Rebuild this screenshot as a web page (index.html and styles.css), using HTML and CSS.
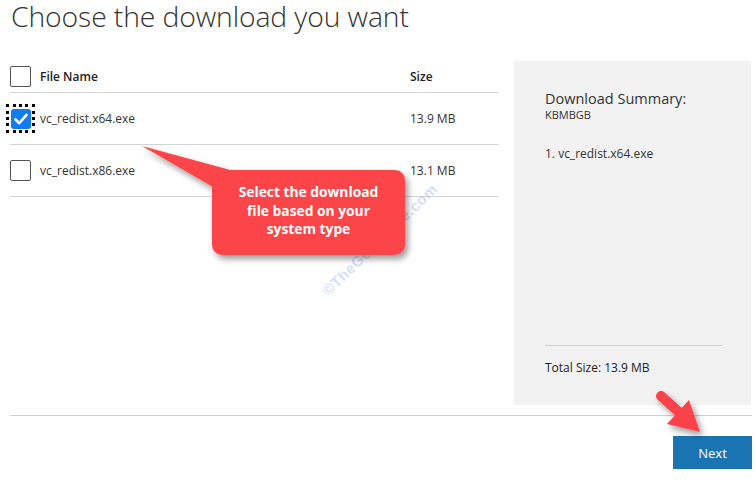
FILE: index.html
```html
<!DOCTYPE html>
<html lang="en">
<head>
<meta charset="utf-8">
<title>Choose the download you want</title>
<link rel="stylesheet" href="styles.css">
</head>
<body>
<div class="page">
  <h1 class="title">Choose the download you want</h1>
  <div class="content">
    <div class="files">
      <div class="row head">
        <span class="cell name"><span class="box"></span><span>File Name</span></span>
        <span class="cell size">Size</span>
      </div>
      <div class="row">
        <span class="cell name"><span class="focus"><span class="box checked"><svg viewBox="0 0 20 20" width="20" height="20"><path d="M4.5 10.5 L8.3 14.2 L15.5 5.8" fill="none" stroke="#fff" stroke-width="2.6" stroke-linecap="round" stroke-linejoin="round"/></svg></span></span><span>vc_redist.x64.exe</span></span>
        <span class="cell size">13.9 MB</span>
      </div>
      <div class="row">
        <span class="cell name"><span class="box"></span><span>vc_redist.x86.exe</span></span>
        <span class="cell size">13.1 MB</span>
      </div>
    </div>
    <aside class="summary">
      <div class="sum-top">
        <div class="sum-title">Download Summary:</div>
        <div class="sum-kb">KBMBGB</div>
        <div class="sum-item">1. vc_redist.x64.exe</div>
      </div>
      <div class="sum-total">Total Size: 13.9 MB</div>
    </aside>
  </div>
  <div class="footer">
    <button class="next">Next</button>
  </div>
</div>

<div class="watermark">©TheGeekPage.com</div>

<svg class="overlay" width="756" height="482" viewBox="0 0 756 482">
  <defs>
    <filter id="sh" x="-20%" y="-20%" width="150%" height="160%">
      <feDropShadow dx="3" dy="4" stdDeviation="3" flood-color="#000" flood-opacity="0.4"/>
    </filter>
  </defs>
  <g filter="url(#sh)" fill="#fb4448">
    <rect x="212" y="170" width="193" height="85" rx="10" ry="10"/>
    <polygon points="142,146 234,171 213,187"/>
  </g>
  <g filter="url(#sh)" fill="#f9434a">
    <line x1="661" y1="396" x2="681" y2="414" stroke="#f9434a" stroke-width="10" stroke-linecap="round"/>
    <polygon points="700,432 667,424 689,400"/>
  </g>
</svg>

<div class="callout-text">Select the download file based on your system type</div>
</body>
</html>
```

FILE: styles.css
```css
html, body {
  margin: 0;
  padding: 0;
  background: #fff;
}
body {
  width: 756px;
  height: 482px;
  overflow: hidden;
  position: relative;
  font-family: "Open Sans", "Noto Sans", "Liberation Sans", sans-serif;
  color: #333;
}
.page {
  padding: 0 4px 0 10px;
}
.title {
  margin: 0;
  font-weight: 300;
  font-size: 28.3px;
  line-height: 32px;
  height: 33px;
  padding-left: 1px;
  color: #333;
  letter-spacing: -0.1px;
  white-space: nowrap;
}
.content {
  display: flex;
  gap: 15px;
  margin-top: 28px;
}
.files {
  width: 489px;
}
.row {
  display: flex;
  align-items: center;
  height: 51px;
  border-bottom: 1px solid #d4d4d4;
  font-size: 12px;
}
.row.head {
  height: 30px;
  padding-bottom: 1px;
  font-weight: 600;
  color: #222;
}
.cell.name {
  flex: 1;
  display: flex;
  align-items: center;
  gap: 9px;
}
.cell.size {
  width: 89px;
}
.box {
  width: 19px;
  height: 19px;
  border: 1px solid #555;
  border-radius: 2px;
  box-sizing: content-box;
  display: block;
  flex: none;
}
.box.checked {
  background: #0f7cf2;
  width: 20px;
  height: 20px;
  border: 0;
  border-radius: 3px;
  margin: 0.5px;
}
.box.checked svg {
  display: block;
}
.focus {
  display: block;
  outline: 3px dotted #000;
  outline-offset: 1px;
  line-height: 0;
}
.summary {
  width: 237px;
  height: 344px;
  background: #f2f2f2;
  box-sizing: border-box;
  padding: 29px 29px 0 31px;
  display: flex;
  flex-direction: column;
  justify-content: space-between;
}
.sum-title {
  font-size: 14.5px;
  line-height: 18px;
  color: #333;
}
.sum-kb {
  font-size: 11px;
  line-height: 14px;
  color: #333;
}
.sum-item {
  margin-top: 23px;
  font-size: 12px;
  line-height: 17px;
}
.sum-total {
  border-top: 1px solid #cfcfcf;
  padding-top: 13px;
  height: 46px;
  box-sizing: border-box;
  font-size: 12px;
  color: #222;
  margin-bottom: 14px;
}
.footer {
  margin-top: 10px;
  border-top: 1px solid #cfcfcf;
  padding-top: 20px;
  display: flex;
  justify-content: flex-end;
}
.next {
  width: 79px;
  height: 33px;
  border: 0;
  background: #1b74b2;
  color: #fff;
  font-family: "Open Sans", "Noto Sans", sans-serif;
  font-size: 13px;
  padding: 0;
}
.overlay {
  position: absolute;
  left: 0;
  top: 0;
  pointer-events: none;
}
.callout-text {
  position: absolute;
  left: 212px;
  top: 183px;
  width: 193px;
  text-align: center;
  color: #fff;
  font-family: "Open Sans", "Noto Sans", sans-serif;
  font-weight: 700;
  font-size: 13.8px;
  line-height: 18.5px;
  padding: 0 20px;
  box-sizing: border-box;
}
.watermark {
  position: absolute;
  left: 292px;
  top: 231px;
  width: 175px;
  text-align: center;
  transform: rotate(-44deg);
  font-family: "Liberation Sans", sans-serif;
  font-weight: 700;
  font-size: 15px;
  color: rgba(110, 155, 225, 0.33);
  letter-spacing: 0.5px;
  white-space: nowrap;
}
```
